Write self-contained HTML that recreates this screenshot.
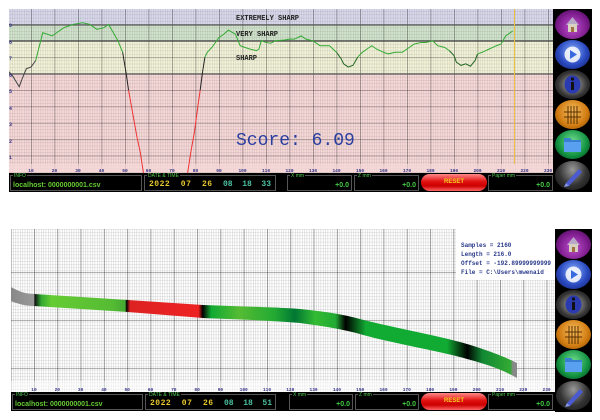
<!DOCTYPE html>
<html><head><meta charset="utf-8">
<style>
*{margin:0;padding:0;box-sizing:border-box}
body{width:600px;height:420px;background:#fff;position:relative;overflow:hidden;font-family:"Liberation Sans",sans-serif}
.abs{position:absolute}
.bar{position:absolute;background:#000}
.box{position:absolute;border:1px solid #555;top:2px;height:16px;background:#000}
.box .lab{position:absolute;left:2px;top:-3px;font-size:5px;color:#5c5;background:#000;padding:0 1px;line-height:6px}
.box .val{position:absolute;font-size:7px;color:#4c4;font-weight:bold;bottom:1px}
.reset{position:absolute;top:1px;height:17px;border-radius:9px;background:linear-gradient(#ff8a8a,#e01010 45%,#c00 70%,#f66);color:#f4d020;font-size:6px;font-weight:bold;text-align:center;line-height:17px}
.side{position:absolute;background:#000}
.btn{position:absolute;left:2px;width:35px;height:29px;border-radius:50%}
.mono{font-family:"Liberation Mono",monospace}
.xl{position:absolute;font-size:5px;color:#338;font-weight:bold;font-family:"Liberation Mono",monospace}
</style></head><body>

<!-- TOP PANEL -->
<div class="abs" style="left:9px;top:9px;width:544px;height:164px;overflow:hidden">
<svg width="544" height="164" viewBox="9 9 544 164" style="position:absolute;left:0;top:0">
 <defs>
  <pattern id="vmin" x="7.5" y="0" width="2.35" height="200" patternUnits="userSpaceOnUse"><rect width="0.6" height="200" fill="#000" opacity="0.13"/></pattern>
  <pattern id="vmaj" x="7.5" y="0" width="23.5" height="200" patternUnits="userSpaceOnUse"><rect width="0.8" height="200" fill="#000" opacity="0.35"/></pattern>
  <pattern id="hmin" x="0" y="172" width="600" height="3.28" patternUnits="userSpaceOnUse"><rect width="600" height="0.5" fill="#000" opacity="0.12"/></pattern>
  <pattern id="hmaj" x="0" y="172" width="600" height="16.4" patternUnits="userSpaceOnUse"><rect width="600" height="0.8" fill="#000" opacity="0.3"/></pattern>
 </defs>
 <rect x="0" y="0" width="600" height="25" fill="#d9d9ec"/>
 <rect x="0" y="25" width="600" height="16" fill="#d2e4cd"/>
 <rect x="0" y="41" width="600" height="33" fill="#f3f3d9"/>
 <rect x="0" y="74" width="600" height="100" fill="#f7d9d9"/>
 <rect x="0" y="0" width="600" height="200" fill="url(#vmin)"/>
 <rect x="0" y="0" width="600" height="200" fill="url(#hmin)"/>
 <rect x="0" y="0" width="600" height="200" fill="url(#vmaj)"/>
 <rect x="0" y="0" width="600" height="200" fill="url(#hmaj)"/>
 <rect x="0" y="24.3" width="600" height="1.3" fill="#555"/>
 <rect x="0" y="40.3" width="600" height="1.3" fill="#444"/>
 <rect x="0" y="73.3" width="600" height="1.3" fill="#555"/>
 <rect x="514" y="0" width="1" height="164" fill="#f0c040"/>
 <rect x="0" y="164" width="600" height="10" fill="#f7d9d9" opacity="0.7"/>
 <g transform="translate(7.5,172) scale(2.35,-16.4)" fill="none" vector-effect="non-scaling-stroke">
  <polyline vector-effect="non-scaling-stroke" stroke="#444" stroke-width="1" points="0,6.2 2,5.9 5,5.2 6,5.6 8,6.3 10,6.4 12,6.8"/>
  <polyline vector-effect="non-scaling-stroke" stroke="#3a3" stroke-width="1" points="12,6.8 15,8.5 19,8.3 24,8.8 28,9.0 32,9.1 35,9.0 38,8.7 41,8.8 43,9.0 47,8.0 49,7.3"/>
  <polyline vector-effect="non-scaling-stroke" stroke="#222" stroke-width="1" points="49,7.3 50.5,6.0 51.5,5.0"/>
  <polyline vector-effect="non-scaling-stroke" stroke="#e33" stroke-width="1" points="51.5,5.0 53,3.8 55,2.2 56.5,1.2 58,-0.2"/>
  <polyline vector-effect="non-scaling-stroke" stroke="#e33" stroke-width="1" points="76.5,-0.2 78,1.2 79.5,2.4 81,4.0 82,5.0"/>
  <polyline vector-effect="non-scaling-stroke" stroke="#222" stroke-width="1" points="82,5.0 83,6.1 84,7.0"/>
  <polyline vector-effect="non-scaling-stroke" stroke="#3a3" stroke-width="1" points="84,7.0 85,7.3 87,7.6 90,8.2 92,8.4 94,8.65 97,8.4 99,7.7 101,7.6 103,7.5 106,7.4 107,7.5 108,8.0 110,7.9 112,7.85 114,8.0 118,8.05 120,8.1 122,8.1 125,8.3 127,8.1 130,8.0 133,7.7 137,7.7 140,7.3"/>
  <polyline vector-effect="non-scaling-stroke" stroke="#262" stroke-width="1" points="140,7.3 142,6.9 143,6.6 145,6.4 147,6.5 149,7.0"/>
  <polyline vector-effect="non-scaling-stroke" stroke="#3a3" stroke-width="1" points="149,7.0 151,7.3 153,7.5 155,7.7 157,7.5 160,7.3 162,7.2 165,7.3 168,7.3 170,7.5 173,7.8 176,7.9 178,7.9 181,8.0 183,7.7 186,7.6 188,7.4"/>
  <polyline vector-effect="non-scaling-stroke" stroke="#262" stroke-width="1" points="188,7.4 190,7.1 191,6.7 193,6.5 195,6.6 197,6.45 199,6.8 200,7.2"/>
  <polyline vector-effect="non-scaling-stroke" stroke="#3a3" stroke-width="1" points="200,7.2 202,7.3 205,7.5 208,7.7 210,7.8 212,8.3 214,8.5 215,8.6"/>
 </g>
 <text x="236" y="20" font-family="Liberation Mono,monospace" font-size="7" font-weight="bold" fill="#222">EXTREMELY SHARP</text>
 <text x="236" y="36" font-family="Liberation Mono,monospace" font-size="7" font-weight="bold" fill="#222">VERY SHARP</text>
 <text x="236" y="60" font-family="Liberation Mono,monospace" font-size="7" font-weight="bold" fill="#222">SHARP</text>
 <text x="236" y="145" font-family="Liberation Mono,monospace" font-size="18" fill="#2a3ea0">Score: 6.09</text>
 <g font-family="Liberation Mono,monospace" font-size="5" font-weight="bold" fill="#338">
  <text x="9" y="27">9</text><text x="9" y="44">8</text><text x="9" y="60">7</text><text x="9" y="77">6</text><text x="9" y="93">5</text><text x="9" y="110">4</text><text x="9" y="126">3</text><text x="9" y="143">2</text><text x="9" y="159">1</text>
 </g>
 <g font-family="Liberation Mono,monospace" font-size="4.5" font-weight="bold" fill="#338" text-anchor="middle">
  <text x="31" y="172">10</text><text x="54.5" y="172">20</text><text x="78" y="172">30</text><text x="101.5" y="172">40</text><text x="125" y="172">50</text><text x="148.5" y="172">60</text><text x="172" y="172">70</text><text x="195.5" y="172">80</text><text x="219" y="172">90</text><text x="242.5" y="172">100</text><text x="266" y="172">110</text><text x="289.5" y="172">120</text><text x="313" y="172">130</text><text x="336.5" y="172">140</text><text x="360" y="172">150</text><text x="383.5" y="172">160</text><text x="407" y="172">170</text><text x="430.5" y="172">180</text><text x="454" y="172">190</text><text x="477.5" y="172">200</text><text x="501" y="172">210</text><text x="524.5" y="172">220</text><text x="548" y="172">230</text>
 </g>
</svg>
</div>
<div class="bar" style="left:9px;top:173px;width:546px;height:19px">
 <div class="box" style="left:1px;width:132px"><span class="lab">INFO</span><span class="val" style="left:2px;color:#6c3">localhost: 0000000001.csv</span></div>
 <div class="box" style="left:135px;width:132px"><span class="lab">DATE &amp; TIME</span><span class="val mono" style="left:4px;color:#e8c830;font-size:8px;letter-spacing:0.5px">2022&nbsp;&nbsp;07&nbsp;&nbsp;26</span><span class="val mono" style="left:78px;color:#4cc0a0;font-size:8px">08&nbsp;&nbsp;18&nbsp;&nbsp;33</span></div>
 <div class="box" style="left:278px;width:65px"><span class="lab">X mm</span><span class="val" style="right:2px">+0.0</span></div>
 <div class="box" style="left:345px;width:65px"><span class="lab">Z mm</span><span class="val" style="right:2px">+0.0</span></div>
 <div class="reset" style="left:412px;width:66px">RESET</div>
 <div class="box" style="left:479px;width:65px"><span class="lab">Paper mm</span><span class="val" style="right:2px">+0.0</span></div>
</div>

<!-- BOTTOM PANEL -->
<div class="abs" style="left:11px;top:229px;width:544px;height:164px;overflow:hidden">
<svg width="544" height="164" viewBox="11 229 544 164" style="position:absolute;left:0;top:0">
 <defs>
  <pattern id="bvmin" x="10.7" y="0" width="2.33" height="500" patternUnits="userSpaceOnUse"><rect width="0.6" height="500" fill="#000" opacity="0.16"/></pattern>
  <pattern id="bvmaj" x="10.7" y="0" width="23.3" height="500" patternUnits="userSpaceOnUse"><rect width="0.8" height="500" fill="#000" opacity="0.4"/></pattern>
  <pattern id="bhmin" x="0" y="229" width="600" height="3.2" patternUnits="userSpaceOnUse"><rect width="600" height="0.5" fill="#000" opacity="0.13"/></pattern>
  <pattern id="bhmaj" x="0" y="272" width="600" height="48" patternUnits="userSpaceOnUse"><rect width="600" height="0.8" fill="#000" opacity="0.35"/></pattern>
  <linearGradient id="rib" gradientUnits="userSpaceOnUse" x1="11" y1="0" x2="518" y2="0">
   <stop offset="0" stop-color="#888"/><stop offset="0.045" stop-color="#999"/>
   <stop offset="0.047" stop-color="#111"/><stop offset="0.06" stop-color="#3a3"/><stop offset="0.08" stop-color="#6c3"/>
   <stop offset="0.2" stop-color="#5b3"/><stop offset="0.225" stop-color="#4a3"/><stop offset="0.228" stop-color="#000"/>
   <stop offset="0.235" stop-color="#d22"/><stop offset="0.37" stop-color="#e22"/><stop offset="0.378" stop-color="#000"/>
   <stop offset="0.395" stop-color="#1a3"/><stop offset="0.45" stop-color="#5b3"/><stop offset="0.52" stop-color="#2a3"/>
   <stop offset="0.56" stop-color="#073"/><stop offset="0.6" stop-color="#3b3"/><stop offset="0.64" stop-color="#2a3"/>
   <stop offset="0.66" stop-color="#000"/><stop offset="0.7" stop-color="#1a3"/><stop offset="0.8" stop-color="#1a3"/>
   <stop offset="0.86" stop-color="#1a3"/><stop offset="0.9" stop-color="#000"/><stop offset="0.93" stop-color="#183"/>
   <stop offset="0.985" stop-color="#3a3"/><stop offset="0.99" stop-color="#888"/><stop offset="1" stop-color="#888"/>
  </linearGradient>
 </defs>
 <rect x="0" y="200" width="600" height="220" fill="#fff"/>
 <rect x="0" y="200" width="600" height="220" fill="url(#bvmin)"/>
 <rect x="0" y="200" width="600" height="220" fill="url(#bhmin)"/>
 <rect x="0" y="200" width="600" height="220" fill="url(#bvmaj)"/>
 <rect x="0" y="200" width="600" height="220" fill="url(#bhmaj)"/>
 <rect x="0" y="381" width="600" height="12" fill="#fff" opacity="0.5"/>
 <path d="M11,287 C20,292 26,294 34,294 L128,300 L203,305 C260,307 290,308 300,309 C330,312 345,315 360,319 C390,327 440,336 467,344 C490,351 505,357 517,363 L517,378 C505,371 490,365 467,359 C440,351 390,343 360,334 C345,330 330,327 300,323 C290,322 260,320 203,318 L128,312 L34,306 C26,306 18,304 11,301 Z" fill="url(#rib)"/>
 <rect x="456" y="229" width="100" height="51" fill="#fff"/>
 <g font-family="Liberation Mono,monospace" font-size="6" font-weight="bold" fill="#2a3a8a">
  <text x="461" y="247">Samples = 2160</text>
  <text x="461" y="256">Length  = 216.0</text>
  <text x="461" y="265">Offset  = -192.89999999999</text>
  <text x="461" y="274">File    = C:\Users\mwenaid</text>
 </g>
 <g font-family="Liberation Mono,monospace" font-size="4.5" font-weight="bold" fill="#338" text-anchor="middle">
  <text x="34" y="391">10</text><text x="57.3" y="391">20</text><text x="80.6" y="391">30</text><text x="103.9" y="391">40</text><text x="127.2" y="391">50</text><text x="150.5" y="391">60</text><text x="173.8" y="391">70</text><text x="197.1" y="391">80</text><text x="220.4" y="391">90</text><text x="243.7" y="391">100</text><text x="267" y="391">110</text><text x="290.3" y="391">120</text><text x="313.6" y="391">130</text><text x="336.9" y="391">140</text><text x="360.2" y="391">150</text><text x="383.5" y="391">160</text><text x="406.8" y="391">170</text><text x="430.1" y="391">180</text><text x="453.4" y="391">190</text><text x="476.7" y="391">200</text><text x="500" y="391">210</text><text x="523.3" y="391">220</text><text x="546.6" y="391">230</text>
 </g>
</svg>
</div>
<div class="bar" style="left:11px;top:392px;width:544px;height:19px">
 <div class="box" style="left:1px;width:131px"><span class="lab">INFO</span><span class="val" style="left:2px;color:#6c3">localhost: 0000000001.csv</span></div>
 <div class="box" style="left:134px;width:131px"><span class="lab">DATE &amp; TIME</span><span class="val mono" style="left:4px;color:#e8c830;font-size:8px;letter-spacing:0.5px">2022&nbsp;&nbsp;07&nbsp;&nbsp;26</span><span class="val mono" style="left:78px;color:#4cc0a0;font-size:8px">08&nbsp;&nbsp;18&nbsp;&nbsp;51</span></div>
 <div class="box" style="left:278px;width:64px"><span class="lab">X mm</span><span class="val" style="right:2px">+0.0</span></div>
 <div class="box" style="left:344px;width:64px"><span class="lab">Z mm</span><span class="val" style="right:2px">+0.0</span></div>
 <div class="reset" style="left:410px;width:66px">RESET</div>
 <div class="box" style="left:477px;width:65px"><span class="lab">Paper mm</span><span class="val" style="right:2px">+0.0</span></div>
</div>

<!-- SIDEBARS -->
<div class="side" style="left:553px;top:9px;width:39px;height:183px">
 <div class="btn" style="top:1px;background:radial-gradient(ellipse at 50% 60%,#c050d0,#7a1a8a 60%,#3a0a40)"><svg width="35" height="29"><path d="M11,15 L17.5,7 L24,15 Z" fill="#b8a8c8"/><rect x="13" y="14" width="9" height="8" fill="#d8d0c0"/><rect x="16" y="17" width="3" height="5" fill="#a07040"/></svg></div>
 <div class="btn" style="top:31px;background:radial-gradient(ellipse at 50% 40%,#8ab0ff,#2a4ac0 55%,#101860)"><svg width="35" height="29"><circle cx="17.5" cy="14.5" r="8" fill="#fff" opacity="0.85"/><path d="M15,10 L22,14.5 L15,19Z" fill="#3a6ae0"/></svg></div>
 <div class="btn" style="top:61px;background:radial-gradient(ellipse at 50% 50%,#bbb,#333 60%,#111)"><svg width="35" height="29"><ellipse cx="17.5" cy="14.5" rx="8" ry="9" fill="#2a3ab0"/><rect x="16" y="12" width="3" height="8" fill="#111"/><circle cx="17.5" cy="9" r="1.6" fill="#111"/></svg></div>
 <div class="btn" style="top:91px;background:radial-gradient(ellipse at 50% 40%,#f8c060,#d07a10 60%,#704000)"><svg width="35" height="29" stroke="#5a3000" stroke-width="1"><path d="M13,6V24M16,6V24M19,6V24M22,6V24M9,12H26M9,17H26"/></svg></div>
 <div class="btn" style="top:121px;background:radial-gradient(ellipse at 50% 40%,#70e090,#109040 60%,#053010)"><svg width="35" height="29"><path d="M9,8 H15 L17,10 H26 V22 H9 Z" fill="#3a80d0"/><path d="M9,12 H26 V22 H9Z" fill="#5aa0f0"/></svg></div>
 <div class="btn" style="top:152px;background:radial-gradient(ellipse at 50% 30%,#999,#333 55%,#111)"><svg width="35" height="29"><path d="M11,22 L24,8 L27,11 L14,25 Z" fill="#4a5ad0"/><path d="M11,22 L9,26 L14,25Z" fill="#8898f0"/></svg></div>
</div>
<div class="side" style="left:555px;top:229px;width:37px;height:183px">
 <div class="btn" style="left:1px;top:1px;background:radial-gradient(ellipse at 50% 60%,#c050d0,#7a1a8a 60%,#3a0a40)"><svg width="35" height="29"><path d="M11,15 L17.5,7 L24,15 Z" fill="#b8a8c8"/><rect x="13" y="14" width="9" height="8" fill="#d8d0c0"/><rect x="16" y="17" width="3" height="5" fill="#a07040"/></svg></div>
 <div class="btn" style="left:1px;top:31px;background:radial-gradient(ellipse at 50% 40%,#8ab0ff,#2a4ac0 55%,#101860)"><svg width="35" height="29"><circle cx="17.5" cy="14.5" r="8" fill="#fff" opacity="0.85"/><path d="M15,10 L22,14.5 L15,19Z" fill="#3a6ae0"/></svg></div>
 <div class="btn" style="left:1px;top:61px;background:radial-gradient(ellipse at 50% 50%,#bbb,#333 60%,#111)"><svg width="35" height="29"><ellipse cx="17.5" cy="14.5" rx="8" ry="9" fill="#2a3ab0"/><rect x="16" y="12" width="3" height="8" fill="#111"/><circle cx="17.5" cy="9" r="1.6" fill="#111"/></svg></div>
 <div class="btn" style="left:1px;top:91px;background:radial-gradient(ellipse at 50% 40%,#f8c060,#d07a10 60%,#704000)"><svg width="35" height="29" stroke="#5a3000" stroke-width="1"><path d="M13,6V24M16,6V24M19,6V24M22,6V24M9,12H26M9,17H26"/></svg></div>
 <div class="btn" style="left:1px;top:121px;background:radial-gradient(ellipse at 50% 40%,#70e090,#109040 60%,#053010)"><svg width="35" height="29"><path d="M9,8 H15 L17,10 H26 V22 H9 Z" fill="#3a80d0"/><path d="M9,12 H26 V22 H9Z" fill="#5aa0f0"/></svg></div>
 <div class="btn" style="left:1px;top:152px;background:radial-gradient(ellipse at 50% 30%,#999,#333 55%,#111)"><svg width="35" height="29"><path d="M11,22 L24,8 L27,11 L14,25 Z" fill="#4a5ad0"/><path d="M11,22 L9,26 L14,25Z" fill="#8898f0"/></svg></div>
</div>
</body></html>
